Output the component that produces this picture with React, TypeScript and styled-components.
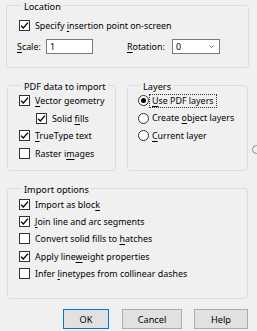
import React from 'react';
import styled, { createGlobalStyle } from 'styled-components';

const Global = createGlobalStyle`
  html, body { margin: 0; padding: 0; background: #f0f0f0; }
  body {
    width: 257px; height: 331px; overflow: hidden;
    font-family: "Noto Sans", "Open Sans", sans-serif;
    font-size: 8.9px; color: #000;
  }
  #root { width: 257px; height: 331px; }
`;

const Dialog = styled.div`
  position: relative;
  width: 257px;
  height: 331px;
  box-sizing: border-box;
  padding: 2px 9px 0 7px;
  display: flex;
  flex-direction: column;
  overflow: hidden;
`;

const Group = styled.fieldset<{ $h: number; $top?: number; $pt?: number; $pl?: number; $mx?: number }>`
  box-sizing: border-box;
  margin: ${p => p.$top ?? 0}px ${p => p.$mx ?? 0}px 0;
  padding: ${p => p.$pt ?? 1}px 4px 0 ${p => p.$pl ?? 11}px;
  height: ${p => p.$h}px;
  border: 1px solid #dcdcdc;
  border-radius: 3px;
  min-width: 0;
  display: flex;
  flex-direction: column;
`;

const Legend = styled.legend`
  padding: 0 2px;
  margin-left: 3px;
  line-height: 10px;
  height: 6px;
  font-size: 9.2px;
`;

const Split = styled.div`
  display: flex;
  gap: 11px;
  margin-top: 14px;
`;

const Row = styled.div<{ $h?: number; $indent?: number; $mt?: number }>`
  display: flex;
  align-items: center;
  height: ${p => p.$h ?? 17.4}px;
  margin-left: ${p => p.$indent ?? 0}px;
  margin-top: ${p => p.$mt ?? 0}px;
  white-space: nowrap;
`;

const Box = styled.span`
  box-sizing: border-box;
  width: 11px;
  height: 11px;
  flex: none;
  background: #fff;
  border: 1px solid #333;
  margin-right: 5px;
  display: flex;
  align-items: center;
  justify-content: center;
`;

const Round = styled(Box)`
  border-radius: 50%;
  margin-right: 0;
`;

const Dot = styled.span`
  width: 5px;
  height: 5px;
  border-radius: 50%;
  background: #000;
`;

const RadioText = styled.span<{ $focus?: boolean }>`
  padding: 0 2px;
  line-height: 12px;
  border: 1px dotted ${p => (p.$focus ? '#333' : 'transparent')};
`;

const Key = styled.u`
  text-decoration: underline;
  text-underline-offset: 1.5px;
  text-decoration-thickness: 1px;
`;

const Label = styled.span<{ $w: number }>`
  width: ${p => p.$w}px;
  flex: none;
`;

const Field = styled.div<{ $w: number }>`
  box-sizing: border-box;
  width: ${p => p.$w}px;
  height: 15px;
  background: #fff;
  border: 1px solid #7a7a7a;
  display: flex;
  align-items: center;
  justify-content: space-between;
  padding: 0 5px 0 3px;
  flex: none;
`;

const Buttons = styled.div`
  display: flex;
  justify-content: flex-end;
  margin-top: 10px;
`;

const Button = styled.div<{ $w: number; $ml: number; $default?: boolean }>`
  box-sizing: border-box;
  width: ${p => p.$w}px;
  height: 20px;
  margin-left: ${p => p.$ml}px;
  background: #e1e1e1;
  border: 1px solid ${p => (p.$default ? '#0078d7' : '#adadad')};
  display: flex;
  align-items: center;
  justify-content: center;
  font-size: 9.2px;
`;

const EdgeKnob = styled.div`
  position: absolute;
  left: 252px;
  top: 145px;
  width: 9px;
  height: 9px;
  box-sizing: border-box;
  border: 1px solid #8a8a8a;
  border-radius: 50%;
  background: #f0f0f0;
`;

const Check = () => (
  <svg width="9" height="9" viewBox="0 0 9 9">
    <path d="M1 4.6 L3.3 7 L8 1.6" fill="none" stroke="#000" strokeWidth="1.3" />
  </svg>
);

const CheckRow: React.FC<{ checked?: boolean; indent?: number; children: React.ReactNode }> = ({ checked, indent, children }) => (
  <Row $indent={indent}>
    <Box>{checked && <Check />}</Box>
    <span>{children}</span>
  </Row>
);

const RadioRow: React.FC<{ on?: boolean; focus?: boolean; children: React.ReactNode }> = ({ on, focus, children }) => (
  <Row>
    <Round>{on && <Dot />}</Round>
    <RadioText $focus={focus}>{children}</RadioText>
  </Row>
);

export default function App() {
  return (
    <>
      <Global />
      <Dialog>
        <Group $h={66} $mx={-1} $pt={9} $pl={12}>
          <Legend>Location</Legend>
          <Row $h={17}>
            <Box><Check /></Box>
            <span>Specify <Key>i</Key>nsertion point on-screen</span>
          </Row>
          <Row $h={17} $mt={4} $indent={-2}>
            <Label $w={29}><Key>S</Key>cale:</Label>
            <Field $w={47}>1</Field>
            <Label $w={34} />
            <Label $w={45}><Key>R</Key>otation:</Label>
            <Field $w={48}>
              <span>0</span>
              <svg width="5" height="3" viewBox="0 0 5 3">
                <path d="M0.5 0.5 L2.5 2.5 L4.5 0.5" fill="none" stroke="#555" strokeWidth="0.9" />
              </svg>
            </Field>
          </Row>
        </Group>

        <Split>
          <Group $h={89} $pt={4.3} style={{ width: 109 }}>
            <Legend>PDF data to import</Legend>
            <CheckRow checked><Key>V</Key>ector geometry</CheckRow>
            <CheckRow checked indent={17}>Solid <Key>f</Key>ills</CheckRow>
            <CheckRow checked><Key>T</Key>rueType text</CheckRow>
            <CheckRow>Raster i<Key>m</Key>ages</CheckRow>
          </Group>
          <Group $h={89} $pt={4.3} $pl={10} style={{ width: 121 }}>
            <Legend>Layers</Legend>
            <RadioRow on focus><Key>U</Key>se PDF layers</RadioRow>
            <RadioRow>Create <Key>o</Key>bject layers</RadioRow>
            <RadioRow><Key>C</Key>urrent layer</RadioRow>
          </Group>
        </Split>

        <Group $h={114} $top={14} $pt={4.5}>
          <Legend>Import options</Legend>
          <CheckRow checked>Import as bloc<Key>k</Key></CheckRow>
          <CheckRow checked><Key>J</Key>oin line and arc segments</CheckRow>
          <CheckRow>Convert solid fills to <Key>h</Key>atches</CheckRow>
          <CheckRow checked>Apply line<Key>w</Key>eight properties</CheckRow>
          <CheckRow>Infer <Key>l</Key>inetypes from collinear dashes</CheckRow>
        </Group>

        <Buttons>
          <Button $w={46} $ml={0} $default>OK</Button>
          <Button $w={60} $ml={13}>Cancel</Button>
          <Button $w={54} $ml={12}>Help</Button>
        </Buttons>
        <EdgeKnob />
      </Dialog>
    </>
  );
}
